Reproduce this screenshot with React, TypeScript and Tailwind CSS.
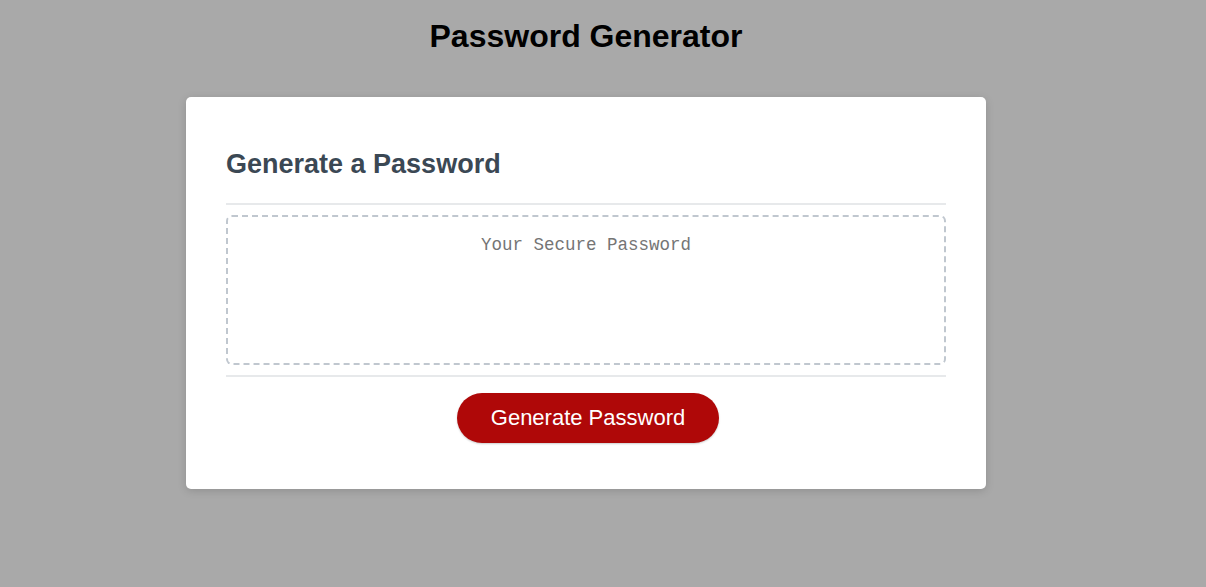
export default function App() {
  return (
    <div className="min-h-[587px] bg-[#a9a9a9] pl-5 pr-[54px] font-['Liberation_Sans',Arial,sans-serif]">
      <header className="pt-[18px] pb-[8px] text-center">
        <h1 className="text-[32px] font-bold leading-[37px] text-black">Password Generator</h1>
      </header>

      <div className="mx-auto mt-[34px] max-w-[800px] rounded-[5px] bg-white px-10 py-[30px] text-[18px] text-[#3b4854] shadow-[0_2px_8px_0_rgba(0,0,0,0.15)]">
        <div>
          <h2 className="pt-[22px] pb-[23px] text-[27px] font-bold leading-[31px]">Generate a Password</h2>
          <div className="h-[2px] w-full bg-[#e7e9eb]" />
        </div>

        <div className="min-h-[100px]">
          <textarea
            readOnly
            placeholder="Your Secure Password"
            aria-label="Generated Password"
            className="my-[10px] block h-[150px] w-full resize-none overflow-hidden rounded-[6px] border-2 border-dashed border-[#c0c7cf] px-[15px] pt-[17px] text-center font-['Liberation_Mono','DejaVu_Sans_Mono',monospace] text-[17.5px] leading-[22px] text-[#3b4854] outline-none placeholder:text-[#757575]"
          />
        </div>

        <div className="text-center">
          <div className="h-[2px] w-full bg-[#e7e9eb]" />
          <button className="mt-4 mr-4 mb-4 ml-5 inline-block cursor-pointer rounded-[25px] bg-[#af0808] px-[34px] py-[14px] text-[22px] leading-[22px] text-white shadow-[0_1px_2px_0_rgba(0,0,0,0.2)]">
            Generate Password
          </button>
        </div>
      </div>
    </div>
  );
}
